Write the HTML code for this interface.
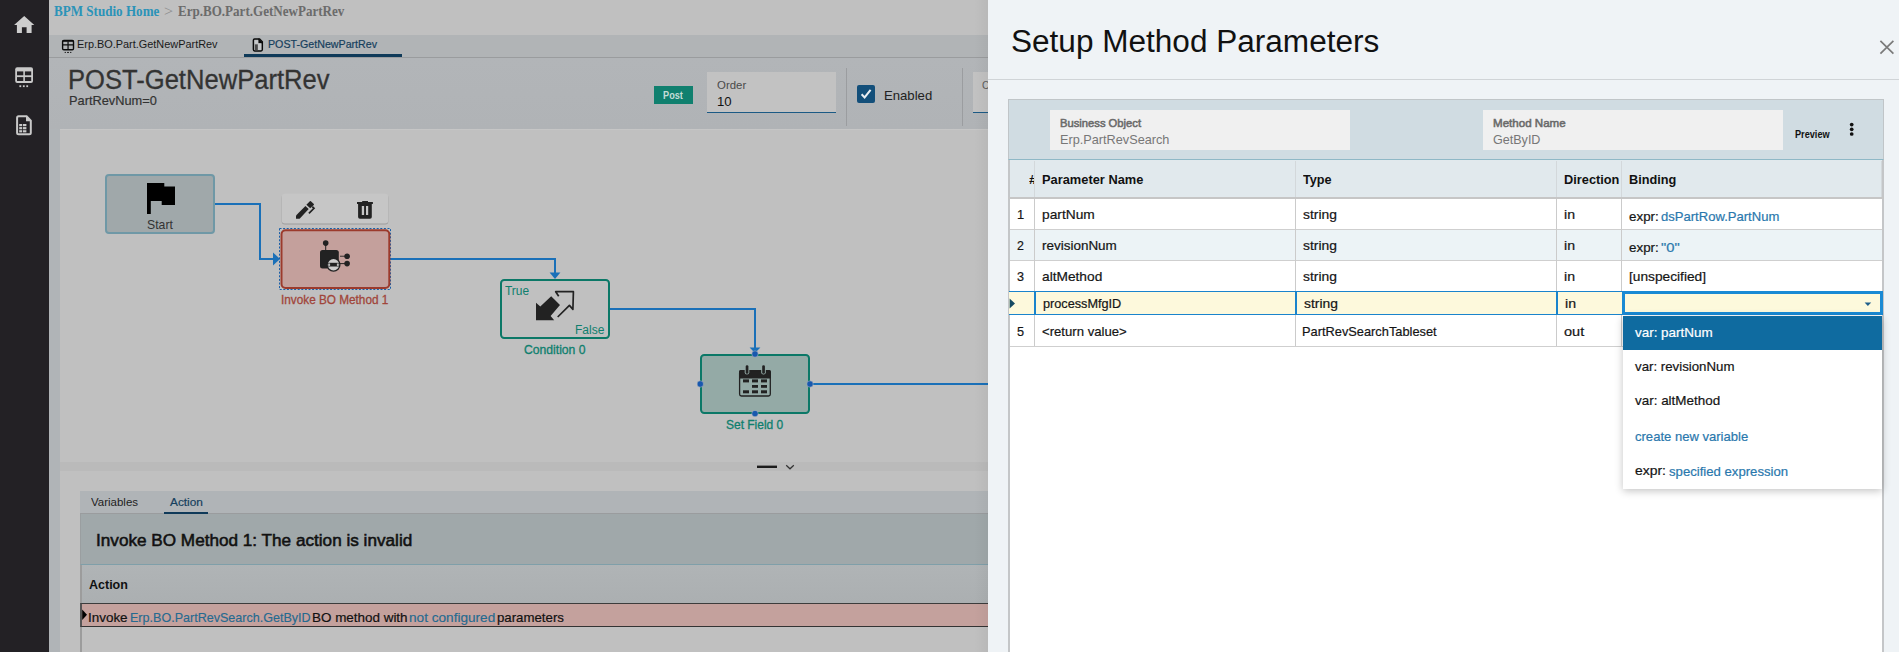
<!DOCTYPE html>
<html lang="en">
<head>
<meta charset="utf-8">
<title>BPM Studio - Setup Method Parameters</title>
<style>
*{box-sizing:border-box;margin:0;padding:0}
html,body{width:1899px;height:652px;overflow:hidden;background:#c0c0c0;font-family:"Liberation Sans",sans-serif}
.abs,.t,svg.i{position:absolute}
.t{white-space:nowrap;line-height:1;transform-origin:0 0;display:block}
#side{left:0;top:0;width:49px;height:652px;background:#232125}
#app{left:49px;top:0;width:939px;height:652px;background:#c0c0c0;overflow:hidden}
#apptext,#paneltext{left:0;top:0;width:1899px;height:652px;pointer-events:none}
#panel{left:988px;top:0;width:911px;height:652px;background:#eff3f6;overflow:hidden}
</style>
</head>
<body>
<!-- ================= SIDEBAR ================= -->
<nav id="side" class="abs">
<svg class="i" style="left:0;top:0" width="49" height="150" viewBox="0 0 49 150">
 <path d="M24.2 16 L34.3 25 L31.6 25 L31.6 33 L26.6 33 L26.6 27.2 L21.9 27.2 L21.9 33 L16.9 33 L16.9 25 L14.1 25 Z" fill="#cdcdcd"/>
 <rect x="15.2" y="67.3" width="17.8" height="15.7" rx="2" fill="#c9c9c9"/>
 <rect x="17" y="71.4" width="6.3" height="3.9" fill="#232125"/><rect x="24.9" y="71.4" width="6.3" height="3.9" fill="#232125"/>
 <rect x="17" y="77.1" width="6.3" height="3.9" fill="#232125"/><rect x="24.9" y="77.1" width="6.3" height="3.9" fill="#232125"/>
 <rect x="19.4" y="85.3" width="1.8" height="1.8" fill="#c9c9c9"/><rect x="22.9" y="85.3" width="1.8" height="1.8" fill="#c9c9c9"/><rect x="26.3" y="85.3" width="1.8" height="1.8" fill="#c9c9c9"/>
 <path d="M18.6 116.2 L26.6 116.2 L30.8 120.6 L30.8 132.8 Q30.8 134.3 29.3 134.3 L18.6 134.3 Q17.1 134.3 17.1 132.8 L17.1 117.7 Q17.1 116.2 18.6 116.2 Z" fill="none" stroke="#c9c9c9" stroke-width="2"/>
 <path d="M26 116 L26 121.2 L31 121.2 Z" fill="#c9c9c9"/>
 <g fill="#c9c9c9"><rect x="19.2" y="124" width="3" height="2.2"/><rect x="23" y="124" width="3.4" height="2.2"/><rect x="19.2" y="127.1" width="3" height="2.2"/><rect x="23" y="127.1" width="3.4" height="2.2"/><rect x="19.2" y="130.2" width="3" height="2.2"/><rect x="23" y="130.2" width="3.4" height="2.2"/></g>
</svg>
</nav>

<!-- ================= MAIN APP (dimmed by overlay) ================= -->
<main id="app" class="abs">
 <!-- coordinates inside #app are page-x minus 49 -->
 <div class="abs" style="left:0;top:0;width:939px;height:35px;background:#c0c0c0"></div>
 <div class="abs" style="left:0;top:35px;width:939px;height:23px;background:#b1b4b6;border-bottom:1px solid #9a9c9e"></div>
 <div class="abs" style="left:195px;top:54px;width:158px;height:3px;background:#0f3a59"></div>
 <div class="abs" style="left:0;top:58px;width:939px;height:71px;background:linear-gradient(#b2b5b8,#b0b3b6)"></div>
 <div class="abs" style="left:0;top:129px;width:11px;height:523px;background:#b0b4b7"></div>
 <!-- canvas -->
 <div class="abs" style="left:11px;top:129px;width:928px;height:523px;background:#c0c0c0;border-top:1px solid #c6c6c6"></div>
 <div class="abs" style="left:11px;top:462px;width:928px;height:9px;background:#bababa"></div>
 <!-- header widgets -->
 <div class="abs" style="left:605px;top:86px;width:39px;height:18px;background:#10806f"></div>
 <div class="abs" style="left:658px;top:72px;width:129px;height:41px;background:#c2c2c2;border-bottom:1.5px solid #1b5a85"></div>
 <div class="abs" style="left:797px;top:68px;width:1px;height:58px;background:#9b9da0"></div>
 <div class="abs" style="left:808px;top:85px;width:18px;height:18px;background:#134f7a;border-radius:2px"></div>
 <div class="abs" style="left:913px;top:68px;width:1px;height:58px;background:#9b9da0"></div>
 <div class="abs" style="left:924px;top:72px;width:40px;height:41px;background:#c2c2c2;border-bottom:1.5px solid #1b5a85"></div>
 <!-- bottom panel -->
 <div class="abs" style="left:31px;top:491px;width:908px;height:23px;background:#b0b4b7;border-bottom:1px solid #9a9c9e"></div>
 <div class="abs" style="left:115px;top:511.5px;width:44px;height:3px;background:#0f3a59"></div>
 <div class="abs" style="left:31px;top:514px;width:908px;height:51px;background:#a0a8aa;border-bottom:1px solid #7f9fa9;border-left:1px solid #9a9ea0"></div>
 <div class="abs" style="left:31px;top:565px;width:908px;height:38px;background:linear-gradient(#b0b4b6,#abafb1);border-left:2px solid #9c9c9c"></div>
 <div class="abs" style="left:31px;top:603px;width:908px;height:24px;background:#c4a19d;border-top:1px solid #3c3c3c;border-bottom:1.5px solid #333;border-left:2px solid #555"></div>
 <div class="abs" style="left:31px;top:627px;width:2px;height:25px;background:#9c9c9c"></div>
 <!-- icons + flow (svg uses page coords shifted by -49) -->
 <svg class="i" style="left:0;top:0" width="939" height="652" viewBox="49 0 939 652">
  <!-- tab icons -->
  <g>
   <rect x="62.6" y="40.4" width="10.9" height="9.3" rx="1.2" fill="none" stroke="#0a0a0a" stroke-width="1.4"/>
   <path d="M62.6 44.9 H73.5 M68.05 41.5 V49.7" stroke="#0a0a0a" stroke-width="1.2" fill="none"/>
   <rect x="62.6" y="40.2" width="10.9" height="1.6" fill="#0a0a0a"/>
   <rect x="64.7" y="51.9" width="1.1" height="1.1" fill="#111"/><rect x="67.2" y="51.9" width="1.6" height="1.1" fill="#111"/><rect x="70.2" y="51.9" width="1.1" height="1.1" fill="#111"/>
   <path d="M254.6 38.9 H259.6 L262.3 41.8 V49.6 Q262.3 50.9 261 50.9 H254.6 Q253.4 50.9 253.4 49.6 V40.2 Q253.4 38.9 254.6 38.9 Z" fill="none" stroke="#0a0a0a" stroke-width="1.5"/>
   <path d="M258.3 38.3 V43.2 H263 Z" fill="#0a0a0a"/>
   <rect x="255" y="44.4" width="2.8" height="6" fill="#4a4a4a"/><rect x="254.6" y="40.2" width="3.6" height="3.6" fill="#c6c8ca"/><rect x="258" y="43.4" width="3.2" height="6.6" fill="#c6c8ca"/>
  </g>
  <!-- checkbox tick -->
  <path d="M861.6 94.3 L864.6 97.4 L870.6 89.9" fill="none" stroke="#e9eef2" stroke-width="2"/>
  <!-- connectors -->
  <g fill="none" stroke="#1a70b8" stroke-width="2">
   <path d="M215 204 H260 V259 H274"/>
   <path d="M391 259 H555 V273"/>
   <path d="M610 309 H755 V348"/>
   <path d="M811 384 H988"/>
  </g>
  <g fill="#1a70b8">
   <path d="M273 252.4 L280 259 L273 265.6 Z"/>
   <path d="M549.6 272.6 L560.4 272.6 L555 279 Z"/>
   <path d="M749.6 347.4 L760.4 347.4 L755 353 Z"/>
  </g>
  <!-- Start node -->
  <rect x="106" y="175" width="108" height="58" rx="3" fill="#a0a8aa" stroke="#6f98a6" stroke-width="2"/>
  <path d="M147 183.1 H164.3 V186.5 H175 V204.9 H161.7 V201 H150.8 V213.9 H147 Z" fill="#000"/>
  <!-- toolbar -->
  <rect x="281.4" y="194.2" width="107.2" height="30.4" rx="3.5" fill="#000" opacity=".07"/>
  <rect x="281.8" y="195" width="106.4" height="29.4" rx="3" fill="#000" opacity=".12"/>
  <rect x="281.8" y="193.8" width="106.4" height="29.6" rx="3" fill="#c6c6c6"/>
  <g fill="#222">
   <path d="M296 218.7 L296 215.5 L305.4 206.1 L308.7 209 L299.6 218.7 Z"/>
   <path d="M306.4 204.8 L309.9 201.2 Q310.4 200.8 310.9 201.2 L313.8 203.9 Q314.2 204.4 313.8 204.9 L310.2 208.3 Z"/>
   <path d="M312.3 206.6 L314 208.3 L308.9 213.4" fill="none" stroke="#222" stroke-width="1.7"/>
   <path d="M362.2 201.1 H368 V202.1 H372.9 V204.1 H357 V202.1 H362.2 Z"/>
   <path d="M358.1 204 H371.8 V217 Q371.8 218.8 370 218.8 H359.9 Q358.1 218.8 358.1 217 Z M361.8 206 V214.9 H364.1 V206 Z M366 206 V214.9 H368.2 V206 Z" fill-rule="evenodd"/>
  </g>
  <!-- Invoke BO node (selected, invalid) -->
  <rect x="279.5" y="228.5" width="111" height="61" fill="none" stroke="#1a5fa8" stroke-width="1" stroke-dasharray="2 1.6"/>
  <rect x="281.5" y="230.3" width="107.8" height="57.6" rx="4" fill="#c4a09c" stroke="#9c3a2c" stroke-width="2"/>
  <g fill="#222">
   <circle cx="325.7" cy="243.1" r="2.8"/>
   <rect x="325.2" y="243" width="1" height="7.5"/>
   <rect x="320" y="250" width="18.8" height="18.5" rx="2.5"/>
   <rect x="340" y="255.75" width="5" height=".9"/>
   <rect x="339" y="263.1" width="6" height="1"/>
   <circle cx="347.1" cy="256.2" r="2.8"/><circle cx="347.1" cy="263.6" r="2.8"/>
   <circle cx="333.5" cy="264.8" r="7.05"/>
  </g>
  <circle cx="333.5" cy="264.8" r="5.7" fill="#cdcdcd"/>
  <rect x="327.9" y="262.8" width="11.2" height="3.7" fill="#222"/>
  <rect x="328.2" y="263.5" width="1.9" height="2.4" fill="#bdbdbd"/><rect x="336.9" y="263.5" width="1.9" height="2.4" fill="#bdbdbd"/>
  <!-- Condition node -->
  <rect x="501" y="280" width="108" height="58" rx="3.2" fill="none" stroke="#0b7867" stroke-width="2"/>
  <path d="M536 302.8 L540.3 306.4 L551.2 296.2 L560 304.9 L550.6 316 L554.2 320.3 L536 320.3 Z" fill="#222"/>
  <path d="M557.7 317 L569.4 305.4 L572.9 309.4 L573.4 291.7 L555.7 291.7 L558.7 296.2" fill="none" stroke="#222" stroke-width="1.7" stroke-linejoin="round"/>
  <!-- Set Field node -->
  <rect x="701" y="355" width="108" height="58" rx="3.2" fill="#94aaa6" stroke="#0b7867" stroke-width="2"/>
  <g fill="#222">
   <path d="M741 370 H769 Q771 370 771 372 V378.4 H739 V372 Q739 370 741 370 Z"/>
  </g>
  <rect x="739.6" y="370.6" width="30.7" height="25.4" rx="1.8" fill="none" stroke="#222" stroke-width="1.3"/>
  <g fill="#94aaa6"><rect x="744.7" y="364.6" width="4.6" height="10" rx="2.3"/><rect x="761.2" y="364.6" width="4.6" height="10" rx="2.3"/></g>
  <g fill="#222"><rect x="745.7" y="365.3" width="2.7" height="8.5" rx="1.3"/><rect x="762.2" y="365.3" width="2.7" height="8.5" rx="1.3"/>
   <rect x="743" y="379.4" width="6" height="3"/><rect x="752" y="379.4" width="6" height="3"/><rect x="761" y="379.4" width="6" height="3"/>
   <rect x="752" y="385" width="6" height="2.8"/><rect x="761" y="385" width="6" height="2.8"/>
   <rect x="743" y="390.3" width="6" height="3"/><rect x="752" y="390.3" width="6" height="3"/><rect x="761" y="390.3" width="6" height="3"/>
  </g>
  <g fill="#1858ae" stroke="#c0c0c0" stroke-width=".5">
   <circle cx="755" cy="354" r="3.2"/><circle cx="700.3" cy="384" r="3.2"/><circle cx="810" cy="384" r="3.2"/><circle cx="755" cy="413.6" r="3.2"/>
  </g>
  <!-- splitter handle -->
  <rect x="757" y="465.6" width="20" height="2.4" fill="#1c1c1c"/>
  <path d="M786.2 465.2 L790 468.8 L793.8 465.2" fill="none" stroke="#333" stroke-width="1.2"/>
  <!-- grid row indicator -->
  <path d="M82.2 609.6 L87 614.8 L82.2 620 Z" fill="#000"/>

 </svg>
 <!-- shadow cast by the sliding panel -->
 <div class="abs" style="left:925px;top:0;width:14px;height:652px;background:linear-gradient(90deg,rgba(0,0,0,0),rgba(0,0,0,.04))"></div>
</main>
<div id="apptext" class="abs" style="clip-path:inset(0 911px 0 0)">
<span class="t" style="left:53.76px;top:4px;line-height:15px;font-size:13.9px;color:#2b93b8;font-weight:bold;font-family:'Liberation Serif',serif;transform:scaleX(0.9412);">BPM Studio Home</span>
<span class="t" style="left:164.09px;top:4px;line-height:15px;font-size:13.9px;color:#8c8c8c;font-family:'Liberation Serif',serif;transform:scaleX(1.1639);">&gt;</span>
<span class="t" style="left:177.56px;top:4px;line-height:15px;font-size:13.9px;color:#6b6b6b;font-weight:bold;font-family:'Liberation Serif',serif;transform:scaleX(0.9392);">Erp.BO.Part.GetNewPartRev</span>
<span class="t" style="left:77.43px;top:38px;line-height:12px;font-size:11.3px;color:#1a1a1a;transform:scaleX(0.9651);">Erp.BO.Part.GetNewPartRev</span>
<span class="t" style="left:267.94px;top:38px;line-height:12px;font-size:11.3px;color:#163f5d;-webkit-text-stroke:0.2px #163f5d;transform:scaleX(0.9440);">POST-GetNewPartRev</span>
<span class="t" style="left:68.11px;top:65px;line-height:30px;font-size:27px;color:#333;-webkit-text-stroke:0.3px #333;transform:scaleX(0.9474);">POST-GetNewPartRev</span>
<span class="t" style="left:68.60px;top:93px;line-height:15px;font-size:12.8px;color:#333;-webkit-text-stroke:0.2px #333;transform:scaleX(0.9993);">PartRevNum=0</span>
<span class="t" style="left:663.46px;top:89px;line-height:12px;font-size:10.6px;color:#c4dcd7;font-weight:bold;transform:scaleX(0.8671);">Post</span>
<span class="t" style="left:717.11px;top:79px;line-height:12px;font-size:11.4px;color:#4a4a4a;transform:scaleX(1.0021);">Order</span>
<span class="t" style="left:716.54px;top:95px;line-height:14px;font-size:12.4px;color:#111;transform:scaleX(1.0621);">10</span>
<span class="t" style="left:884.02px;top:88px;line-height:15px;font-size:13.4px;color:#222;transform:scaleX(0.9809);">Enabled</span>
<span class="t" style="left:982.03px;top:79px;line-height:12px;font-size:11.4px;color:#5a5a5a;transform:scaleX(0.8992);">C</span>
<span class="t" style="left:146.63px;top:218px;line-height:14px;font-size:12.4px;color:#333;transform:scaleX(0.9886);">Start</span>
<span class="t" style="left:281.05px;top:293px;line-height:14px;font-size:12.4px;color:#a0453a;-webkit-text-stroke:0.3px #a0453a;transform:scaleX(0.9501);">Invoke BO Method 1</span>
<span class="t" style="left:505.48px;top:284px;line-height:14px;font-size:12px;color:#0e7f6e;transform:scaleX(0.9940);">True</span>
<span class="t" style="left:575.00px;top:323px;line-height:14px;font-size:12px;color:#0e7f6e;transform:scaleX(1.0000);">False</span>
<span class="t" style="left:524.03px;top:343px;line-height:14px;font-size:12.4px;color:#0e7f6e;-webkit-text-stroke:0.3px #0e7f6e;transform:scaleX(0.9816);">Condition 0</span>
<span class="t" style="left:726.38px;top:418px;line-height:14px;font-size:12.4px;color:#0e7f6e;-webkit-text-stroke:0.3px #0e7f6e;transform:scaleX(0.9665);">Set Field 0</span>
<span class="t" style="left:90.85px;top:495px;line-height:14px;font-size:11.8px;color:#222;transform:scaleX(0.9744);">Variables</span>
<span class="t" style="left:169.56px;top:495px;line-height:14px;font-size:11.8px;color:#163f5d;-webkit-text-stroke:0.2px #163f5d;transform:scaleX(1.0025);">Action</span>
<span class="t" style="left:96.29px;top:531px;line-height:19px;font-size:17px;color:#111;-webkit-text-stroke:0.55px #111;transform:scaleX(1.0090);">Invoke BO Method 1: The action is invalid</span>
<span class="t" style="left:88.63px;top:577px;line-height:15px;font-size:13px;color:#111;font-weight:bold;transform:scaleX(0.9616);">Action</span>
<span class="t" style="left:88.35px;top:610px;line-height:15px;font-size:13px;color:#111;-webkit-text-stroke:0.2px #111;transform:scaleX(1.0330);">Invoke</span>
<span class="t" style="left:129.63px;top:610px;line-height:15px;font-size:13px;color:#256a90;-webkit-text-stroke:0.15px #256a90;transform:scaleX(0.9654);">Erp.BO.PartRevSearch.GetByID</span>
<span class="t" style="left:311.97px;top:610px;line-height:15px;font-size:13px;color:#111;-webkit-text-stroke:0.2px #111;transform:scaleX(1.0334);">BO method with</span>
<span class="t" style="left:409.27px;top:610px;line-height:15px;font-size:13px;color:#256a90;-webkit-text-stroke:0.15px #256a90;transform:scaleX(1.0465);">not configured</span>
<span class="t" style="left:497.32px;top:610px;line-height:15px;font-size:13px;color:#111;-webkit-text-stroke:0.2px #111;transform:scaleX(1.0176);">parameters</span>
</div>

<!-- ================= SLIDE-OUT PANEL ================= -->
<aside id="panel" class="abs">
 <!-- coordinates inside #panel are page-x minus 988 -->
 <div class="abs" style="left:0;top:79px;width:911px;height:1px;background:#d0d4d7"></div>
 <div class="abs" style="left:20px;top:99px;width:876px;height:553px;background:#fff;border-left:2px solid #c4c6c8;border-right:2px solid #c4c6c8"></div>
 <div class="abs" style="left:20px;top:99px;width:876px;height:61px;background:#d0dce2;border:1px solid #c0c5c8;border-bottom:1px solid #8fb8c6"></div>
 <div class="abs" style="left:62px;top:110px;width:300px;height:40px;background:#f0f0f0"></div>
 <div class="abs" style="left:495px;top:110px;width:300px;height:40px;background:#f0f0f0"></div>
 <!-- close X, kebab -->
 <svg class="i" style="left:880px;top:30px" width="31" height="115" viewBox="1868 30 31 115">
  <path d="M1880.4 40.8 L1893.4 53.6 M1893.4 40.8 L1880.4 53.6" stroke="#7a7a7a" stroke-width="1.7" fill="none"/>
 </svg>
 <svg class="i" style="left:855px;top:118px" width="16" height="24" viewBox="1843 118 16 24">
  <circle cx="1851.7" cy="124.6" r="1.85" fill="#111"/><circle cx="1851.7" cy="129.3" r="1.85" fill="#111"/><circle cx="1851.7" cy="134" r="1.85" fill="#111"/>
 </svg>
 <!-- grid header -->
 <div class="abs" style="left:22px;top:160px;width:872px;height:37px;background:#e1e9ed"></div>
 <div class="abs" style="left:46px;top:161px;width:0;height:36px;border-left:1px solid #d3d8db"></div>
 <div class="abs" style="left:307px;top:161px;width:0;height:36px;border-left:1px solid #d3d8db"></div>
 <div class="abs" style="left:568px;top:161px;width:0;height:36px;border-left:1px solid #d3d8db"></div>
 <div class="abs" style="left:633px;top:161px;width:0;height:36px;border-left:1px solid #d3d8db"></div>
 <div class="abs" style="left:893px;top:161px;width:0;height:36px;border-left:1px solid #d3d8db"></div>
 <div class="abs" style="left:20px;top:197px;width:876px;height:2px;background:#c6c6c6"></div>
 <!-- rows -->
 <div class="abs" style="left:22px;top:199px;width:872px;height:31px;background:#fff;border-bottom:1px solid #cfcfcf"></div>
 <div class="abs" style="left:22px;top:230px;width:872px;height:31px;background:#ecf3f6;border-bottom:1px solid #cfcfcf"></div>
 <div class="abs" style="left:22px;top:261px;width:872px;height:31px;background:#fff"></div>
 <div class="abs" style="left:22px;top:315px;width:872px;height:32px;background:#fff;border-bottom:1px solid #cfcfcf"></div>
 <!-- column lines -->
 <div class="abs" style="left:46px;top:199px;width:1px;height:147px;background:#cbcbcb"></div>
 <div class="abs" style="left:307px;top:199px;width:1px;height:147px;background:#cbcbcb"></div>
 <div class="abs" style="left:568px;top:199px;width:1px;height:147px;background:#cbcbcb"></div>
 <div class="abs" style="left:633px;top:199px;width:1px;height:147px;background:#cbcbcb"></div>
 <!-- selected row -->
 <div class="abs" style="left:21px;top:291px;width:874px;height:24px;background:#fdf9dc;border-top:1.5px solid #1a84cc;border-bottom:1.5px solid #1a84cc"></div>
 <div class="abs" style="left:46px;top:291px;width:2px;height:24px;background:#1a84cc"></div>
 <div class="abs" style="left:307px;top:291px;width:2px;height:24px;background:#1a84cc"></div>
 <div class="abs" style="left:568px;top:291px;width:2px;height:24px;background:#1a84cc"></div>
 <div class="abs" style="left:634px;top:291px;width:261px;height:24px;background:#fdf9dc;border:3px solid #1a8ad4"></div>
 <svg class="i" style="left:20px;top:296px" width="10" height="16" viewBox="1008 296 10 16">
  <path d="M1009.6 298.6 L1015 303.6 L1009.6 308.6 Z" fill="#154a63"/>
 </svg>
 <svg class="i" style="left:874px;top:300px" width="12" height="8" viewBox="1862 300 12 8">
  <path d="M1864.6 302.6 L1871.2 302.6 L1867.9 306.1 Z" fill="#1f5f8b"/>
 </svg>

</aside>
<div id="paneltext" class="abs">
<span class="t" style="left:1010.72px;top:24px;line-height:35px;font-size:31px;color:#111;transform:scaleX(1.0178);">Setup Method Parameters</span>
<span class="t" style="left:1060.06px;top:116px;line-height:14px;font-size:11.8px;color:#6a6a6a;-webkit-text-stroke:0.55px #6a6a6a;transform:scaleX(0.9507);">Business Object</span>
<span class="t" style="left:1059.62px;top:132px;line-height:15px;font-size:13px;color:#777;transform:scaleX(0.9768);">Erp.PartRevSearch</span>
<span class="t" style="left:1492.96px;top:116px;line-height:14px;font-size:11.8px;color:#6a6a6a;-webkit-text-stroke:0.55px #6a6a6a;transform:scaleX(0.9803);">Method Name</span>
<span class="t" style="left:1492.93px;top:132px;line-height:15px;font-size:13px;color:#777;transform:scaleX(0.9655);">GetByID</span>
<span class="t" style="left:1794.86px;top:129px;line-height:11px;font-size:10px;color:#111;font-weight:bold;transform:scaleX(0.9160);">Preview</span>
<span class="t" style="left:1041.95px;top:172px;line-height:15px;font-size:13.4px;color:#111;font-weight:bold;transform:scaleX(0.9589);">Parameter Name</span>
<span class="t" style="left:1303.48px;top:172px;line-height:15px;font-size:13.4px;color:#111;font-weight:bold;transform:scaleX(0.9461);">Type</span>
<span class="t" style="left:1563.65px;top:172px;line-height:15px;font-size:13.4px;color:#111;font-weight:bold;transform:scaleX(0.9551);">Direction</span>
<span class="t" style="left:1628.66px;top:172px;line-height:15px;font-size:13.4px;color:#111;font-weight:bold;transform:scaleX(0.9495);">Binding</span>
<span class="t" style="left:1016.67px;top:207px;line-height:15px;font-size:12.8px;color:#151515;-webkit-text-stroke:0.2px #151515;transform:scaleX(1.0053);">1</span>
<span class="t" style="left:1016.97px;top:238px;line-height:15px;font-size:12.8px;color:#151515;-webkit-text-stroke:0.2px #151515;transform:scaleX(0.9669);">2</span>
<span class="t" style="left:1016.85px;top:269px;line-height:15px;font-size:12.8px;color:#151515;-webkit-text-stroke:0.2px #151515;transform:scaleX(0.9865);">3</span>
<span class="t" style="left:1016.81px;top:324px;line-height:15px;font-size:12.8px;color:#151515;-webkit-text-stroke:0.2px #151515;transform:scaleX(0.9930);">5</span>
<span class="t" style="left:1041.70px;top:207px;line-height:15px;font-size:12.8px;color:#151515;-webkit-text-stroke:0.2px #151515;transform:scaleX(1.0749);">partNum</span>
<span class="t" style="left:1041.70px;top:238px;line-height:15px;font-size:12.8px;color:#151515;-webkit-text-stroke:0.2px #151515;transform:scaleX(1.0517);">revisionNum</span>
<span class="t" style="left:1041.98px;top:269px;line-height:15px;font-size:12.8px;color:#151515;-webkit-text-stroke:0.2px #151515;transform:scaleX(1.0724);">altMethod</span>
<span class="t" style="left:1042.96px;top:296px;line-height:15px;font-size:12.8px;color:#151515;-webkit-text-stroke:0.2px #151515;transform:scaleX(0.9917);">processMfgID</span>
<span class="t" style="left:1041.99px;top:324px;line-height:15px;font-size:12.8px;color:#151515;-webkit-text-stroke:0.2px #151515;transform:scaleX(1.0265);">&lt;return value&gt;</span>
<span class="t" style="left:1302.60px;top:207px;line-height:15px;font-size:12.8px;color:#151515;-webkit-text-stroke:0.2px #151515;transform:scaleX(1.0827);">string</span>
<span class="t" style="left:1563.68px;top:207px;line-height:15px;font-size:12.8px;color:#151515;-webkit-text-stroke:0.2px #151515;transform:scaleX(1.1036);">in</span>
<span class="t" style="left:1302.60px;top:238px;line-height:15px;font-size:12.8px;color:#151515;-webkit-text-stroke:0.2px #151515;transform:scaleX(1.0827);">string</span>
<span class="t" style="left:1563.68px;top:238px;line-height:15px;font-size:12.8px;color:#151515;-webkit-text-stroke:0.2px #151515;transform:scaleX(1.1036);">in</span>
<span class="t" style="left:1302.60px;top:269px;line-height:15px;font-size:12.8px;color:#151515;-webkit-text-stroke:0.2px #151515;transform:scaleX(1.0827);">string</span>
<span class="t" style="left:1563.68px;top:269px;line-height:15px;font-size:12.8px;color:#151515;-webkit-text-stroke:0.2px #151515;transform:scaleX(1.1036);">in</span>
<span class="t" style="left:1303.60px;top:296px;line-height:15px;font-size:12.8px;color:#151515;-webkit-text-stroke:0.2px #151515;transform:scaleX(1.0827);">string</span>
<span class="t" style="left:1564.78px;top:296px;line-height:15px;font-size:12.8px;color:#151515;-webkit-text-stroke:0.2px #151515;transform:scaleX(1.1036);">in</span>
<span class="t" style="left:1302.00px;top:324px;line-height:15px;font-size:12.8px;color:#151515;-webkit-text-stroke:0.2px #151515;transform:scaleX(1.0014);">PartRevSearchTableset</span>
<span class="t" style="left:1563.59px;top:324px;line-height:15px;font-size:12.8px;color:#151515;-webkit-text-stroke:0.2px #151515;transform:scaleX(1.1340);">out</span>
<span class="t" style="left:1629.01px;top:209px;line-height:15px;font-size:12.8px;color:#151515;-webkit-text-stroke:0.2px #151515;transform:scaleX(1.0453);">expr:</span>
<span class="t" style="left:1660.63px;top:209px;line-height:15px;font-size:12.8px;color:#2a78ad;-webkit-text-stroke:0.2px #2a78ad;transform:scaleX(1.0206);">dsPartRow.PartNum</span>
<span class="t" style="left:1629.01px;top:240px;line-height:15px;font-size:12.8px;color:#151515;-webkit-text-stroke:0.2px #151515;transform:scaleX(1.0453);">expr:</span>
<span class="t" style="left:1660.58px;top:240px;line-height:15px;font-size:12.8px;color:#2a78ad;-webkit-text-stroke:0.2px #2a78ad;transform:scaleX(1.1511);">"0"</span>
<span class="t" style="left:1628.68px;top:269px;line-height:15px;font-size:12.8px;color:#151515;-webkit-text-stroke:0.2px #151515;transform:scaleX(1.0714);">[unspecified]</span>
<div class="abs" style="left:0;top:0;width:1899px;height:652px;clip-path:inset(160px 865px 455px 1020px)"><span class="t" style="left:1029.30px;top:172px;line-height:15px;font-size:13.4px;color:#111;font-weight:bold;transform:scaleX(1.0890);">#</span></div>
</div>
<div class="abs" style="left:1623px;top:316px;width:259px;height:173px;background:#fff;box-shadow:0 2px 8px rgba(0,0,0,.24)">
 <div class="abs" style="left:0;top:0;width:259px;height:34px;background:#0f6ba0"></div>
</div>
<div class="abs" style="left:0;top:0;width:1899px;height:652px">
<span class="t" style="left:1634.96px;top:325px;line-height:15px;font-size:12.8px;color:#fff;-webkit-text-stroke:0.2px #fff;transform:scaleX(1.0497);">var: partNum</span>
<span class="t" style="left:1634.96px;top:359px;line-height:15px;font-size:12.8px;color:#151515;-webkit-text-stroke:0.2px #151515;transform:scaleX(1.0361);">var: revisionNum</span>
<span class="t" style="left:1634.96px;top:393px;line-height:15px;font-size:12.8px;color:#151515;-webkit-text-stroke:0.2px #151515;transform:scaleX(1.0501);">var: altMethod</span>
<span class="t" style="left:1635.12px;top:429px;line-height:15px;font-size:12.8px;color:#2a78ad;-webkit-text-stroke:0.2px #2a78ad;transform:scaleX(1.0201);">create new variable</span>
<span class="t" style="left:1634.59px;top:463px;line-height:15px;font-size:12.8px;color:#151515;-webkit-text-stroke:0.2px #151515;transform:scaleX(1.0891);">expr:</span>
<span class="t" style="left:1669.12px;top:464px;line-height:15px;font-size:12.8px;color:#2a78ad;-webkit-text-stroke:0.2px #2a78ad;transform:scaleX(1.0272);">specified expression</span>
</div>

</body>
</html>
